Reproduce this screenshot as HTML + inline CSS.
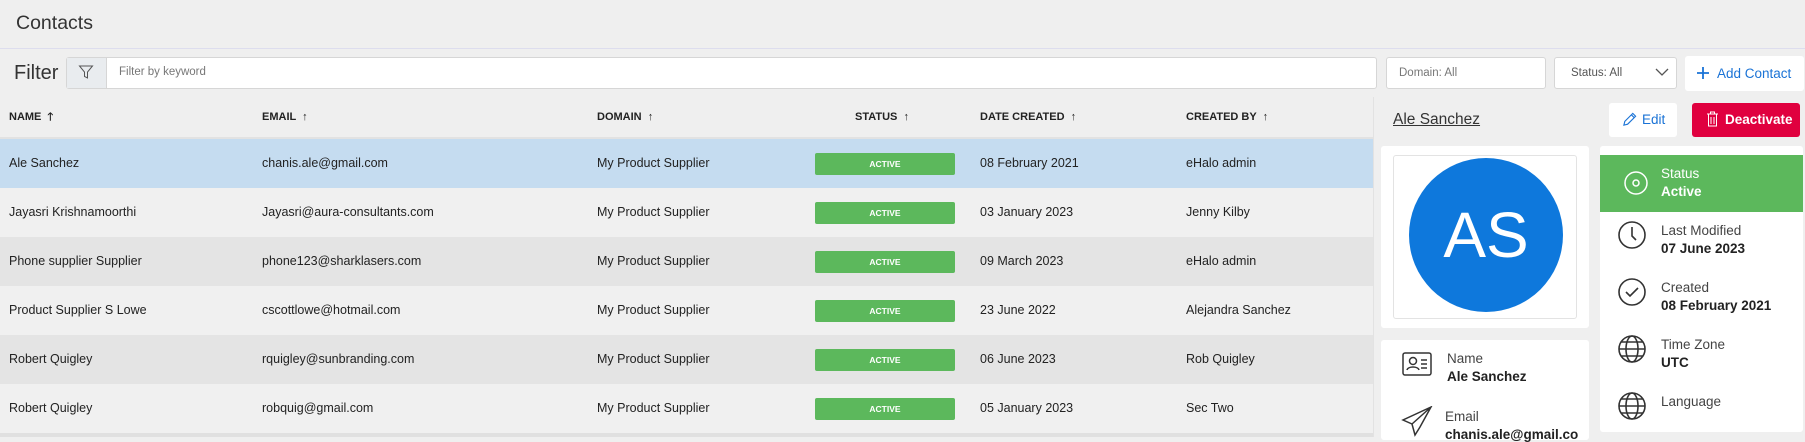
<!DOCTYPE html>
<html><head><style>
*{box-sizing:border-box;margin:0;padding:0}
body{width:1805px;height:437px;overflow:hidden;background:#efefef;font-family:"Liberation Sans",sans-serif;color:#222;position:relative}
.a{position:absolute}
.row{position:absolute;left:0;width:1373px;height:49px;font-size:12.5px;line-height:49px}
.row span{position:absolute}
.badge{position:absolute;left:815px;top:14px;width:140px;height:22px;background:#5cb85c;color:#fff;font-size:8.5px;font-weight:bold;text-align:center;line-height:22px;border-radius:2px}
.hd{position:absolute;top:97px;font-size:11px;font-weight:bold;line-height:40px}
.card{position:absolute;background:#fff;border-radius:3px}
.lbl{font-size:13.5px;color:#444}
.val{font-size:13.5px;font-weight:bold;color:#222;margin-top:3px}
</style></head><body>
<div class="a" style="left:16px;top:12px;font-size:19.5px;color:#333">Contacts</div>
<div class="a" style="left:0;top:48px;width:1805px;height:1px;background:#dde"></div>
<div class="a" style="left:14px;top:62px;font-size:20px;color:#333">Filter</div>
<div class="a" style="left:66px;top:57px;width:1311px;height:32px;background:#fff;border:1px solid #d6d6d6;border-radius:3px"></div>
<div class="a" style="left:67px;top:58px;width:40px;height:30px;background:#e9ecef;border-right:1px solid #d6d6d6"></div>
<svg class="a" style="left:78px;top:64px" width="16" height="16" viewBox="0 0 16 16"><path d="M1.5 2h13L9.5 8v6L6.5 12.5V8z" fill="none" stroke="#555" stroke-width="1"/></svg>
<div class="a" style="left:119px;top:66px;font-size:11.5px;color:#777">Filter by keyword</div>
<div class="a" style="left:1386px;top:57px;width:160px;height:32px;background:#fff;border:1px solid #d6d6d6;border-radius:3px;font-size:11.5px;color:#777;padding:9px 12px">Domain: All</div>
<div class="a" style="left:1554px;top:57px;width:123px;height:32px;background:#fff;border:1px solid #d6d6d6;border-radius:3px;font-size:11.5px;color:#555;padding:9px 16px">Status: All</div>
<svg class="a" style="left:1655px;top:67px" width="14" height="10"><path d="M1 2l6 6 6-6" fill="none" stroke="#555" stroke-width="1.3"/></svg>
<div class="a" style="left:1685px;top:56px;width:119px;height:35px;background:#fff;border-radius:3px;font-size:13.5px;color:#1a73d6;padding:10px 0 0 32px">Add Contact</div>
<svg class="a" style="left:1697px;top:67px" width="12" height="12"><path d="M6 0v12M0 6h12" stroke="#1a73d6" stroke-width="1.8"/></svg>

<div class="hd" style="left:9px">NAME &nbsp;🡑</div>
<div class="hd" style="left:262px">EMAIL &nbsp;<span style="font-weight:normal">↑</span></div>
<div class="hd" style="left:597px">DOMAIN &nbsp;<span style="font-weight:normal">↑</span></div>
<div class="hd" style="left:855px">STATUS &nbsp;<span style="font-weight:normal">↑</span></div>
<div class="hd" style="left:980px">DATE CREATED &nbsp;<span style="font-weight:normal">↑</span></div>
<div class="hd" style="left:1186px">CREATED BY &nbsp;<span style="font-weight:normal">↑</span></div>
<div class="a" style="left:0;top:137px;width:1373px;height:2px;background:#e2e2e2"></div>

<div class="row" style="top:139px;background:#c5dcf0"><span style="left:9px">Ale Sanchez</span><span style="left:262px">chanis.ale@gmail.com</span><span style="left:597px">My Product Supplier</span><div class="badge">ACTIVE</div><span style="left:980px">08 February 2021</span><span style="left:1186px">eHalo admin</span></div>
<div class="row" style="top:188px;background:#f0f0f0"><span style="left:9px">Jayasri Krishnamoorthi</span><span style="left:262px">Jayasri@aura-consultants.com</span><span style="left:597px">My Product Supplier</span><div class="badge">ACTIVE</div><span style="left:980px">03 January 2023</span><span style="left:1186px">Jenny Kilby</span></div>
<div class="row" style="top:237px;background:#e4e4e4"><span style="left:9px">Phone supplier Supplier</span><span style="left:262px">phone123@sharklasers.com</span><span style="left:597px">My Product Supplier</span><div class="badge">ACTIVE</div><span style="left:980px">09 March 2023</span><span style="left:1186px">eHalo admin</span></div>
<div class="row" style="top:286px;background:#f0f0f0"><span style="left:9px">Product Supplier S Lowe</span><span style="left:262px">cscottlowe@hotmail.com</span><span style="left:597px">My Product Supplier</span><div class="badge">ACTIVE</div><span style="left:980px">23 June 2022</span><span style="left:1186px">Alejandra Sanchez</span></div>
<div class="row" style="top:335px;background:#e4e4e4"><span style="left:9px">Robert Quigley</span><span style="left:262px">rquigley@sunbranding.com</span><span style="left:597px">My Product Supplier</span><div class="badge">ACTIVE</div><span style="left:980px">06 June 2023</span><span style="left:1186px">Rob Quigley</span></div>
<div class="row" style="top:384px;background:#f0f0f0"><span style="left:9px">Robert Quigley</span><span style="left:262px">robquig@gmail.com</span><span style="left:597px">My Product Supplier</span><div class="badge">ACTIVE</div><span style="left:980px">05 January 2023</span><span style="left:1186px">Sec Two</span></div>
<div class="a" style="left:0;top:433px;width:1373px;height:4px;background:#e0e0e0"></div>
<div class="a" style="left:1373px;top:97px;width:1px;height:340px;background:#e2e2e2"></div>

<div class="a" style="left:1393px;top:111px;font-size:15.5px;color:#333;text-decoration:underline">Ale Sanchez</div>
<div class="a" style="left:1609px;top:103px;width:68px;height:34px;background:#fff;border-radius:3px;font-size:13.5px;color:#1a73d6;padding:9px 0 0 33px">Edit</div>
<svg class="a" style="left:1622px;top:112px" width="15" height="15" viewBox="0 0 16 16"><path d="M2 14l1-4 8.5-8.5 3 3L6 13z M10 3l3 3" fill="none" stroke="#1a73d6" stroke-width="1.2"/></svg>
<div class="a" style="left:1692px;top:103px;width:108px;height:34px;background:#e0003f;border-radius:3px;font-size:13.5px;color:#fff;font-weight:bold;padding:9px 0 0 33px">Deactivate</div>
<svg class="a" style="left:1706px;top:111px" width="13" height="16" viewBox="0 0 13 16"><path d="M1 3h11M4.5 3V1h4v2M2.5 3v12h8V3M5 6v7M8 6v7" fill="none" stroke="#fff" stroke-width="1"/></svg>

<div class="card" style="left:1381px;top:146px;width:208px;height:182px"></div>
<div class="card" style="left:1393px;top:155px;width:184px;height:164px;border:1px solid #e3e3e3"></div>
<div class="a" style="left:1409px;top:158px;width:154px;height:154px;border-radius:50%;background:#0e78dc;color:#fff;font-size:64px;text-align:center;line-height:154px">AS</div>

<div class="card" style="left:1381px;top:340px;width:208px;height:100px"></div>
<svg class="a" style="left:1402px;top:352px" width="30" height="24" viewBox="0 0 30 24"><rect x="1" y="1" width="28" height="22" rx="2" fill="none" stroke="#333" stroke-width="1.5"/><circle cx="11" cy="9" r="3.5" fill="none" stroke="#333" stroke-width="1.5"/><path d="M5 18c1-4 11-4 12 0M19 8h6M19 12h6M19 16h6" fill="none" stroke="#333" stroke-width="1.5"/></svg>
<div class="a" style="left:1447px;top:351px"><div class="lbl">Name</div><div class="val">Ale Sanchez</div></div>
<svg class="a" style="left:1401px;top:406px" width="32" height="31" viewBox="0 0 32 31"><path d="M30 1L2 14l9 4 3 11 5-8 11-20zM11 18L30 1" fill="none" stroke="#333" stroke-width="1.5"/></svg>
<div class="a" style="left:1445px;top:409px"><div class="lbl">Email</div><div class="val">chanis.ale@gmail.co</div></div>

<div class="card" style="left:1600px;top:146px;width:203px;height:286px"></div>
<div class="a" style="left:1600px;top:155px;width:203px;height:57px;background:#5cb85c"></div>
<svg class="a" style="left:1623px;top:170px" width="26" height="26"><circle cx="13" cy="13" r="11" fill="none" stroke="#fff" stroke-width="1.5"/><circle cx="13" cy="13" r="3" fill="none" stroke="#fff" stroke-width="1.5"/></svg>
<div class="a" style="left:1661px;top:166px;color:#fff"><div class="lbl" style="color:#fff">Status</div><div class="val" style="color:#fff">Active</div></div>
<svg class="a" style="left:1617px;top:220px" width="30" height="30"><circle cx="15" cy="15" r="13" fill="none" stroke="#333" stroke-width="1.6"/><path d="M15 7v9l4 4" fill="none" stroke="#333" stroke-width="1.6"/></svg>
<div class="a" style="left:1661px;top:223px"><div class="lbl">Last Modified</div><div class="val">07 June 2023</div></div>
<svg class="a" style="left:1617px;top:277px" width="30" height="30"><circle cx="15" cy="15" r="13" fill="none" stroke="#333" stroke-width="1.6"/><path d="M9 15l4 4 8-8" fill="none" stroke="#333" stroke-width="1.6"/></svg>
<div class="a" style="left:1661px;top:280px"><div class="lbl">Created</div><div class="val">08 February 2021</div></div>
<svg class="a" style="left:1617px;top:334px" width="30" height="30"><g fill="none" stroke="#333" stroke-width="1.6"><circle cx="15" cy="15" r="13"/><ellipse cx="15" cy="15" rx="6" ry="13"/><path d="M2 15h26M4 8h22M4 22h22"/></g></svg>
<div class="a" style="left:1661px;top:337px"><div class="lbl">Time Zone</div><div class="val">UTC</div></div>
<svg class="a" style="left:1617px;top:391px" width="30" height="30"><g fill="none" stroke="#333" stroke-width="1.6"><circle cx="15" cy="15" r="13"/><ellipse cx="15" cy="15" rx="6" ry="13"/><path d="M2 15h26M4 8h22M4 22h22"/></g></svg>
<div class="a" style="left:1661px;top:394px"><div class="lbl">Language</div></div>
</body></html>
